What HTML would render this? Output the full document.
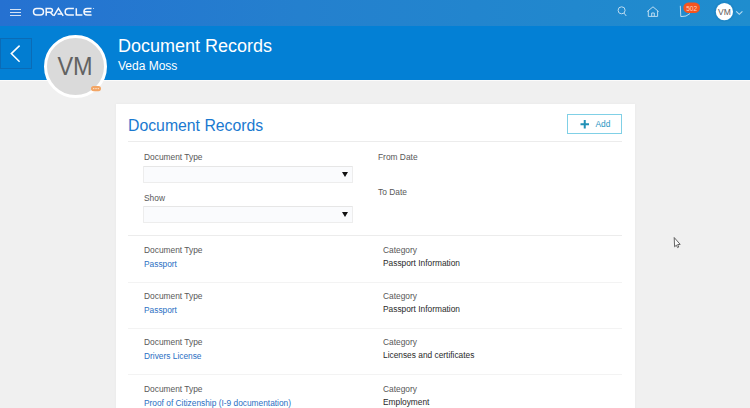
<!DOCTYPE html>
<html><head><meta charset="utf-8">
<style>
*{margin:0;padding:0;box-sizing:border-box}
html,body{width:750px;height:408px;overflow:hidden;background:#f0f0f0;font-family:"Liberation Sans",sans-serif}
.abs{position:absolute}
#top{left:0;top:0;width:750px;height:26px;background:linear-gradient(90deg,#2571d1 0%,#2480ce 40%,#1f8dce 100%)}
#band{left:0;top:26px;width:750px;height:54px;background:#0380d5}
.ham{left:10px;width:11px;height:1.3px;background:#d3e2f5}
#back{left:0;top:38px;width:32px;height:31px;border:1px solid #0b6bb6;background:rgba(0,40,90,0.03)}
#avatar{left:43.5px;top:35px;width:63px;height:63px;border-radius:50%;background:#dadada;border:3px solid #fff}
#avatar span{position:absolute;left:0;right:0;top:15px;text-align:center;font-size:23.5px;color:#626262;transform:scaleY(1.07);transform-origin:top}
#badge{left:91px;top:86px;width:10px;height:5px;border-radius:3px;background:#f3a564}
#h1{left:118px;top:34.5px;font-size:18px;color:#fff;white-space:nowrap;transform:scaleY(1.04);transform-origin:top left}
#h2{left:118px;top:58.7px;font-size:12px;color:#fff;white-space:nowrap}
#card{left:116px;top:104px;width:519px;height:320px;background:#fff;box-shadow:0 0 3px rgba(0,0,0,0.04)}
#ct{left:128px;top:116.5px;font-size:15.8px;color:#1a79d0;white-space:nowrap}
#add{left:567px;top:114px;width:55px;height:20px;border:1px solid #80d0e6}
.sep{left:128px;width:494px;height:1px;background:#ececec}
.lbl{font-size:8.4px;color:#585858;white-space:nowrap}
.sel{left:143px;width:210px;height:16.5px;border:1px solid #ededed;border-top-color:#e6e6e6;background:#fafbfd;border-radius:1px}
.sel i{position:absolute;right:4.5px;top:5.3px;width:0;height:0;border-left:3px solid transparent;border-right:3px solid transparent;border-top:5px solid #111}
.link{font-size:8.35px;color:#2b6fc3;white-space:nowrap}
.val{font-size:8.35px;color:#2a2a2a;white-space:nowrap}
</style></head><body>
<div id="top" class="abs"></div>
<div class="abs ham" style="top:8.6px"></div>
<div class="abs ham" style="top:12px"></div>
<div class="abs ham" style="top:15.2px"></div>
<svg class="abs" style="left:0;top:0" width="100" height="26" viewBox="0 0 100 26">
 <g fill="none" stroke="#f4f8fd" stroke-width="1.5">
  <rect x="33.5" y="8.6" width="10" height="6.5" rx="3.25"/>
  <path d="M46.2 15.8 V8.6 H50.6 A1.8 1.8 0 0 1 50.6 12.2 H46.2 M50.2 12.2 L53.6 15.8"/>
  <path d="M53.9 15.8 L58.4 8.4 L63.2 15.8 M57.6 13.9 H61.8"/>
  <path d="M73.9 8.6 H68.4 A3.25 3.25 0 0 0 68.4 15.1 H73.9"/>
  <path d="M76.3 8.2 V15.1 H82.4"/>
  <path d="M91.6 8.6 H87.2 A3.25 3.25 0 0 0 87.2 15.1 H91.6 M84.6 11.85 H91.2"/>
 </g>
 <circle cx="93.6" cy="8.6" r="0.5" fill="#f4f8fd"/>
</svg>
<!-- right icons -->
<svg class="abs" style="left:600px;top:0" width="150" height="26" viewBox="600 0 150 26">
 <g fill="none" stroke="#bcdcf2" stroke-width="1">
  <circle cx="621.6" cy="10.3" r="3.5"/>
  <path d="M623.9 13 L626.3 16"/>
  <path d="M647.2 11.6 L653 6.8 L658.6 11.6 M648.3 10.8 V16.4 H657.6 V10.8 M651.7 16.4 V13 H654.3 V16.4"/>
  <path d="M680.3 5.8 L680.8 16.6 L686 16 L690 13.5"/>
 </g>
 <rect x="683.3" y="2.5" width="16.7" height="10.5" rx="5.25" fill="#f4541f"/>
 <text x="691.7" y="10.5" font-size="6.6" fill="#ffd6c4" text-anchor="middle" font-family="Liberation Sans">502</text>
 <circle cx="724.4" cy="11.7" r="9.6" fill="none" stroke="#1b7fc0" stroke-opacity="0.5" stroke-width="1.6"/>
 <circle cx="724.4" cy="11.7" r="8.6" fill="#fff"/>
 <text x="724.4" y="14.8" font-size="8.5" fill="#5a5a5a" text-anchor="middle" font-family="Liberation Sans">VM</text>
 <path d="M736.2 11.3 L739.3 14.3 L742.4 11.3" fill="none" stroke="#b7dcf2" stroke-width="1.1"/>
</svg>

<div id="band" class="abs"></div>
<div class="abs" style="left:0;top:80px;width:750px;height:1px;background:#fbfbfb"></div>
<div id="back" class="abs"></div>
<svg class="abs" style="left:0;top:30px" width="40" height="45" viewBox="0 30 40 45"><path d="M19.6 45.6 L11.3 53.6 L19.6 61.8" stroke="#fff" stroke-width="1.5" fill="none"/></svg>
<div id="avatar" class="abs"><span>VM</span></div>
<svg class="abs" style="left:90px;top:85px" width="12" height="7" viewBox="0 0 12 7"><rect x="1" y="1" width="10" height="5.2" rx="2.6" fill="#f3a564"/><circle cx="3.8" cy="3.6" r="0.55" fill="#fff"/><circle cx="6" cy="3.6" r="0.55" fill="#fff"/><circle cx="8.2" cy="3.6" r="0.55" fill="#fff"/></svg>
<div id="h1" class="abs">Document Records</div>
<div id="h2" class="abs">Veda Moss</div>

<div id="card" class="abs"></div>
<div id="ct" class="abs">Document Records</div>
<div id="add" class="abs"></div>
<svg class="abs" style="left:578px;top:118px" width="14" height="13" viewBox="0 0 14 13"><path d="M2.5 6.3 H11 M6.75 2 V10.6" stroke="#2191b6" stroke-width="2" fill="none"/></svg>
<div class="abs" style="left:595.5px;top:119px;font-size:8.4px;color:#1f94c2">Add</div>
<div class="abs sep" style="top:141px"></div>
<div class="abs lbl" style="left:144px;top:152px">Document Type</div>
<div class="abs sel" style="top:166px"><i></i></div>
<div class="abs lbl" style="left:144px;top:193px">Show</div>
<div class="abs sel" style="top:206px"><i></i></div>
<div class="abs lbl" style="left:378px;top:152px">From Date</div>
<div class="abs lbl" style="left:378px;top:187px">To Date</div>
<div class="abs sep" style="top:235px"></div>

<div class="abs lbl" style="left:144px;top:245px">Document Type</div>
<div class="abs link" style="left:144px;top:259px">Passport</div>
<div class="abs lbl" style="left:383px;top:245px">Category</div>
<div class="abs val" style="left:383px;top:258px">Passport Information</div>
<div class="abs sep" style="top:281.5px;height:1.5px;background:#f3f3f3"></div>

<div class="abs lbl" style="left:144px;top:291px">Document Type</div>
<div class="abs link" style="left:144px;top:305px">Passport</div>
<div class="abs lbl" style="left:383px;top:291px">Category</div>
<div class="abs val" style="left:383px;top:304px">Passport Information</div>
<div class="abs sep" style="top:327.5px;height:1.5px;background:#f3f3f3"></div>

<div class="abs lbl" style="left:144px;top:337.3px">Document Type</div>
<div class="abs link" style="left:144px;top:351.3px">Drivers License</div>
<div class="abs lbl" style="left:383px;top:337.3px">Category</div>
<div class="abs val" style="left:383px;top:350.3px">Licenses and certificates</div>
<div class="abs sep" style="top:373.5px;height:1.5px;background:#f3f3f3"></div>

<div class="abs lbl" style="left:144px;top:383.5px">Document Type</div>
<div class="abs link" style="left:144px;top:397.5px">Proof of Citizenship (I-9 documentation)</div>
<div class="abs lbl" style="left:383px;top:383.5px">Category</div>
<div class="abs val" style="left:383px;top:396.6px">Employment</div>

<svg class="abs" style="left:670px;top:235px" width="14" height="16" viewBox="0 0 14 16"><path d="M4.2 2.5 L4.6 11.8 L6.3 10.2 L7.6 12.6 L8.8 12 L7.6 9.6 L10.2 9.4 Z" fill="#fafafa" stroke="#555" stroke-width="0.9" stroke-linejoin="round"/></svg>
</body></html>
